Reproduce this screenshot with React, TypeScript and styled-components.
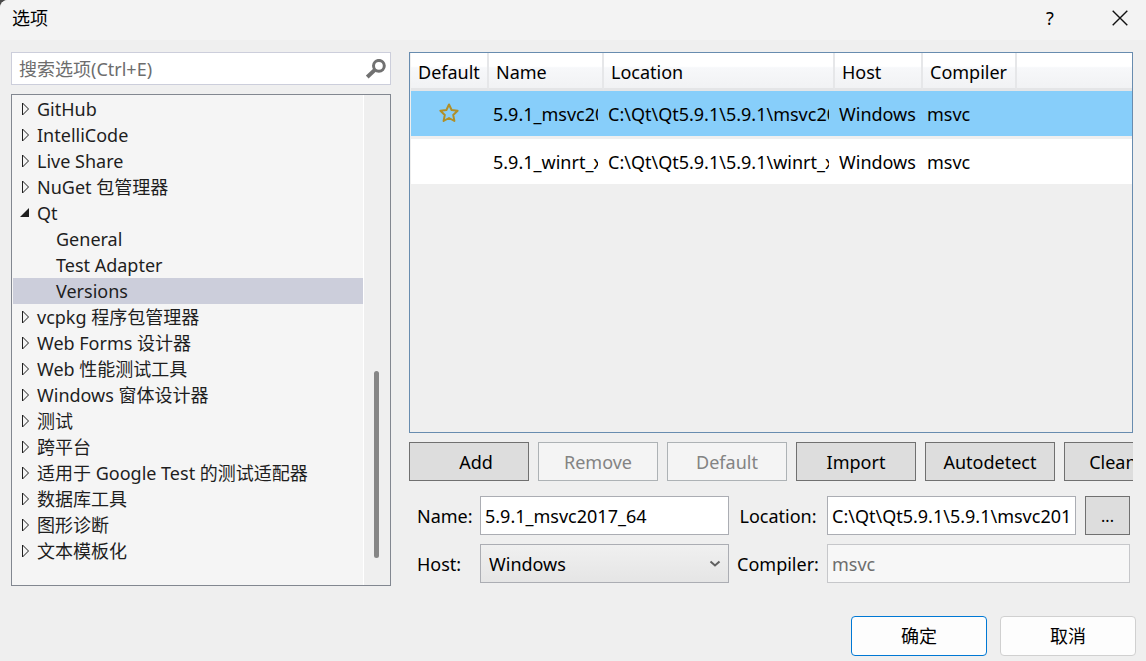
import React from 'react';
import styled, { createGlobalStyle, css } from 'styled-components';

const GlobalStyle = createGlobalStyle`
  *, *::before, *::after { box-sizing: border-box; }
  body { margin: 0; background: #4a4a4a; }
  body, button, input, select {
    font-family: 'Noto Sans', 'Noto Sans CJK SC', sans-serif;
    font-size: 18px;
    line-height: 26px;
    color: #000;
  }
`;

const Dialog = styled.div`
  display: flex;
  flex-direction: column;
  min-height: 100vh;
  background: #efefef;
  border-top-left-radius: 8px;
  overflow: hidden;
`;

const TitleBar = styled.header`
  display: flex;
  align-items: center;
  height: 40px;
  padding: 0 8px 5px 12px;
  background: #f3f3f3;
`;

const Title = styled.h1`
  flex: 1;
  margin: 0;
  font-size: 18px;
  font-weight: 400;
`;

const TitleButton = styled.button`
  display: flex;
  align-items: center;
  justify-content: center;
  width: 36px;
  height: 32px;
  margin-left: 34px;
  padding: 0;
  border: 0;
  background: none;
`;

const Body = styled.main`
  display: flex;
  flex: 1;
  gap: 18px;
  padding: 12px 13px 0 11px;
`;

const Sidebar = styled.aside`
  display: flex;
  flex-direction: column;
  flex: 0 0 380px;
  gap: 9px;
`;

const SearchBox = styled.label`
  display: flex;
  align-items: center;
  height: 33px;
  padding: 0 4px 0 7px;
  border: 1px solid #cccedb;
  background: #fff;
`;

const SearchInput = styled.input`
  flex: 1;
  min-width: 0;
  padding: 0;
  border: 0;
  outline: 0;
  background: none;
  &::placeholder { color: #6d6d6d; opacity: 1; }
`;

const TreeBox = styled.div`
  display: flex;
  flex: 1;
  border: 1px solid #828790;
  background: #f5f5f5;
`;

const Tree = styled.ul`
  flex: 1;
  margin: 0;
  padding: 1px 0 20px 1px;
  list-style: none;
`;

const TreeItem = styled.button<{ $child?: boolean; $selected?: boolean }>`
  display: flex;
  align-items: center;
  width: 100%;
  height: 26px;
  padding: 0 0 0 ${(p) => (p.$child ? 43 : 7)}px;
  border: 0;
  background: ${(p) => (p.$selected ? '#cccedb' : 'none')};
  color: #1e1e1e;
  text-align: left;
  white-space: nowrap;
`;

const Arrow = styled.svg`
  flex: none;
  width: 11px;
  height: 16px;
  margin-right: 6px;
`;

const ScrollTrack = styled.div`
  display: flex;
  flex-direction: column;
  align-items: center;
  width: 27px;
  padding: 0 2px 27px 0;
  border-left: 1px solid #fff;
  background: #efefef;
`;

const ScrollSpace = styled.div`
  flex: 276;
`;

const ScrollThumb = styled.div`
  flex: 187;
  width: 5px;
  border-radius: 3px;
  background: #868686;
`;

const Panel = styled.section`
  display: flex;
  flex-direction: column;
  flex: 1;
  min-width: 0;
  padding-bottom: 3px;
`;

const GridBox = styled.div`
  flex: 1;
  border: 1px solid #688caf;
  padding: 0 0 0 1px;
`;

const Grid = styled.table`
  width: 100%;
  table-layout: fixed;
  border-collapse: separate;
  border-spacing: 0;
`;

const HeadCell = styled.th<{ $width?: number }>`
  width: ${(p) => (p.$width ? `${p.$width}px` : 'auto')};
  height: 38px;
  padding: 2px 0 0 7px;
  border-right: ${(p) => (p.$width ? '2px solid #e6e7e9' : '0')};
  border-bottom: 3px solid #e4e5e7;
  background: linear-gradient(#fff 0, #fff 38%, #f7f8fa 42%, #f1f2f4 100%);
  font-weight: 400;
  text-align: left;
  white-space: nowrap;
`;

const Row = styled.tr<{ $selected?: boolean }>`
  background: ${(p) => (p.$selected ? '#87cefa' : '#fff')};
`;

const Cell = styled.td`
  height: 48px;
  padding: 0 6px 0 4px;
  border-bottom: 3px solid #efefef;
`;

const CellText = styled.div`
  overflow: hidden;
  white-space: nowrap;
`;

const StarCell = styled.div`
  display: flex;
  justify-content: center;
  padding-bottom: 2px;
`;

const ButtonBar = styled.div`
  display: flex;
  gap: 9px;
  margin-top: 9px;
  overflow: hidden;
`;

const Button = styled.button<{ $wide?: boolean }>`
  flex: none;
  width: ${(p) => (p.$wide ? 130 : 120)}px;
  height: 39px;
  padding: 0;
  border: 1px solid #707070;
  background: #ddd;
  &:disabled {
    border-color: #adb2b5;
    background: #f4f4f4;
    color: #838383;
  }
`;

const ImageButton = styled(Button)`
  padding-left: 14px;
`;

const Form = styled.form`
  display: grid;
  grid-template-columns: 63px minmax(0, 1fr) 98px minmax(0, 1fr) 54px;
  row-gap: 9px;
  align-items: center;
  margin-top: 15px;
  padding: 0 3px 0 8px;
`;

const Label = styled.label<{ $center?: boolean }>`
  text-align: ${(p) => (p.$center ? 'center' : 'left')};
  white-space: nowrap;
`;

const field = css`
  width: 100%;
  height: 39px;
  border: 1px solid #abadb3;
`;

const TextField = styled.input<{ $span?: boolean }>`
  ${field}
  padding: 0 4px;
  background: #fff;
  ${(p) => p.$span && 'grid-column: span 2;'}
  &:disabled {
    border-color: #c6c7ca;
    background: #f7f7f7;
    color: #6d6d6d;
  }
`;

const SelectWrap = styled.div`
  display: grid;
  align-items: center;
`;

const Select = styled.select`
  ${field}
  grid-area: 1 / 1;
  padding: 0 28px 0 8px;
  border-radius: 0;
  appearance: none;
  background: linear-gradient(#f0f0f0, #e5e5e5);
`;

const Chevron = styled.svg`
  grid-area: 1 / 1;
  justify-self: end;
  width: 12px;
  height: 8px;
  margin-right: 8px;
  pointer-events: none;
`;

const BrowseButton = styled(Button)`
  justify-self: end;
  width: 45px;
  font-size: 16px;
`;

const Footer = styled.footer`
  display: flex;
  justify-content: flex-end;
  gap: 13px;
  padding: 30px 10px 5px;
`;

const DialogButton = styled.button<{ $primary?: boolean }>`
  width: 136px;
  height: 40px;
  border: 1px solid ${(p) => (p.$primary ? '#0078d4' : '#d0d0d0')};
  border-radius: 4px;
  background: #fdfdfd;
`;

type Node = { label: string; child?: boolean; open?: boolean; selected?: boolean };

const nodes: Node[] = [
  { label: 'GitHub' },
  { label: 'IntelliCode' },
  { label: 'Live Share' },
  { label: 'NuGet 包管理器' },
  { label: 'Qt', open: true },
  { label: 'General', child: true },
  { label: 'Test Adapter', child: true },
  { label: 'Versions', child: true, selected: true },
  { label: 'vcpkg 程序包管理器' },
  { label: 'Web Forms 设计器' },
  { label: 'Web 性能测试工具' },
  { label: 'Windows 窗体设计器' },
  { label: '测试' },
  { label: '跨平台' },
  { label: '适用于 Google Test 的测试适配器' },
  { label: '数据库工具' },
  { label: '图形诊断' },
  { label: '文本模板化' },
];

const versions = [
  { name: '5.9.1_msvc2017_64', location: 'C:\\Qt\\Qt5.9.1\\5.9.1\\msvc2017_64', host: 'Windows', compiler: 'msvc', isDefault: true },
  { name: '5.9.1_winrt_x64', location: 'C:\\Qt\\Qt5.9.1\\5.9.1\\winrt_x64', host: 'Windows', compiler: 'msvc', isDefault: false },
];

export default function App() {
  return (
    <>
      <GlobalStyle />
      <Dialog>
        <TitleBar>
          <Title>选项</Title>
          <TitleButton type="button">?</TitleButton>
          <TitleButton type="button" aria-label="关闭">
            <svg width="16" height="16" viewBox="0 0 16 16" fill="none" stroke="#111" strokeWidth="1.4">
              <path d="M.7.7l14.6 14.6M15.3.7L.7 15.3" />
            </svg>
          </TitleButton>
        </TitleBar>
        <Body>
          <Sidebar>
            <SearchBox>
              <SearchInput placeholder="搜索选项(Ctrl+E)" aria-label="搜索选项" />
              <svg width="20" height="20" viewBox="0 0 20 20" fill="none" stroke="#717171">
                <circle cx="12.9" cy="6.8" r="5.4" strokeWidth="3" />
                <path d="M8.7 11L1.3 18" strokeWidth="3.8" />
              </svg>
            </SearchBox>
            <TreeBox>
              <Tree>
                {nodes.map((n) => (
                  <li key={n.label}>
                    <TreeItem type="button" $child={n.child} $selected={n.selected}>
                      {!n.child && (
                        <Arrow viewBox="0 0 11 16" aria-hidden="true">
                          {n.open ? (
                            <path d="M9 3v9H0z" fill="#1e1e1e" />
                          ) : (
                            <path d="M2.5 2v12L8.5 8z" fill="none" stroke="#1e1e1e" />
                          )}
                        </Arrow>
                      )}
                      {n.label}
                    </TreeItem>
                  </li>
                ))}
              </Tree>
              <ScrollTrack>
                <ScrollSpace />
                <ScrollThumb />
              </ScrollTrack>
            </TreeBox>
          </Sidebar>
          <Panel>
            <GridBox>
              <Grid>
                <thead>
                  <tr>
                    <HeadCell $width={78}>Default</HeadCell>
                    <HeadCell $width={115}>Name</HeadCell>
                    <HeadCell $width={231}>Location</HeadCell>
                    <HeadCell $width={88}>Host</HeadCell>
                    <HeadCell $width={94}>Compiler</HeadCell>
                    <HeadCell />
                  </tr>
                </thead>
                <tbody>
                  {versions.map((v) => (
                    <Row key={v.name} $selected={v.isDefault}>
                      <Cell>
                        {v.isDefault && (
                          <StarCell>
                            <svg width="20" height="20" viewBox="0 0 20 20" fill="none" stroke="#b08f28" strokeWidth="2" strokeLinejoin="round">
                              <path d="M10 1.5l2.6 5.5 6 .8-4.4 4.1 1.2 6.1-5.4-3-5.4 3 1.2-6.1L1.4 7.8l6-.8z" />
                            </svg>
                          </StarCell>
                        )}
                      </Cell>
                      <Cell><CellText>{v.name}</CellText></Cell>
                      <Cell><CellText>{v.location}</CellText></Cell>
                      <Cell><CellText>{v.host}</CellText></Cell>
                      <Cell><CellText>{v.compiler}</CellText></Cell>
                      <Cell />
                    </Row>
                  ))}
                </tbody>
              </Grid>
            </GridBox>
            <ButtonBar>
              <ImageButton type="button">Add</ImageButton>
              <Button type="button" disabled>Remove</Button>
              <Button type="button" disabled>Default</Button>
              <Button type="button">Import</Button>
              <Button type="button" $wide>Autodetect</Button>
              <Button type="button">Cleanup</Button>
            </ButtonBar>
            <Form>
              <Label htmlFor="name">Name:</Label>
              <TextField id="name" defaultValue="5.9.1_msvc2017_64" />
              <Label htmlFor="location" $center>Location:</Label>
              <TextField id="location" defaultValue={versions[0].location} />
              <BrowseButton type="button">...</BrowseButton>
              <Label htmlFor="host">Host:</Label>
              <SelectWrap>
                <Select id="host" defaultValue="Windows">
                  <option>Windows</option>
                </Select>
                <Chevron viewBox="0 0 12 8" fill="none" stroke="#606060" strokeWidth="2">
                  <path d="M1.5 1.5L6 5.5l4.5-4" />
                </Chevron>
              </SelectWrap>
              <Label htmlFor="compiler" $center>Compiler:</Label>
              <TextField id="compiler" defaultValue="msvc" disabled $span />
            </Form>
          </Panel>
        </Body>
        <Footer>
          <DialogButton type="button" $primary>确定</DialogButton>
          <DialogButton type="button">取消</DialogButton>
        </Footer>
      </Dialog>
    </>
  );
}
